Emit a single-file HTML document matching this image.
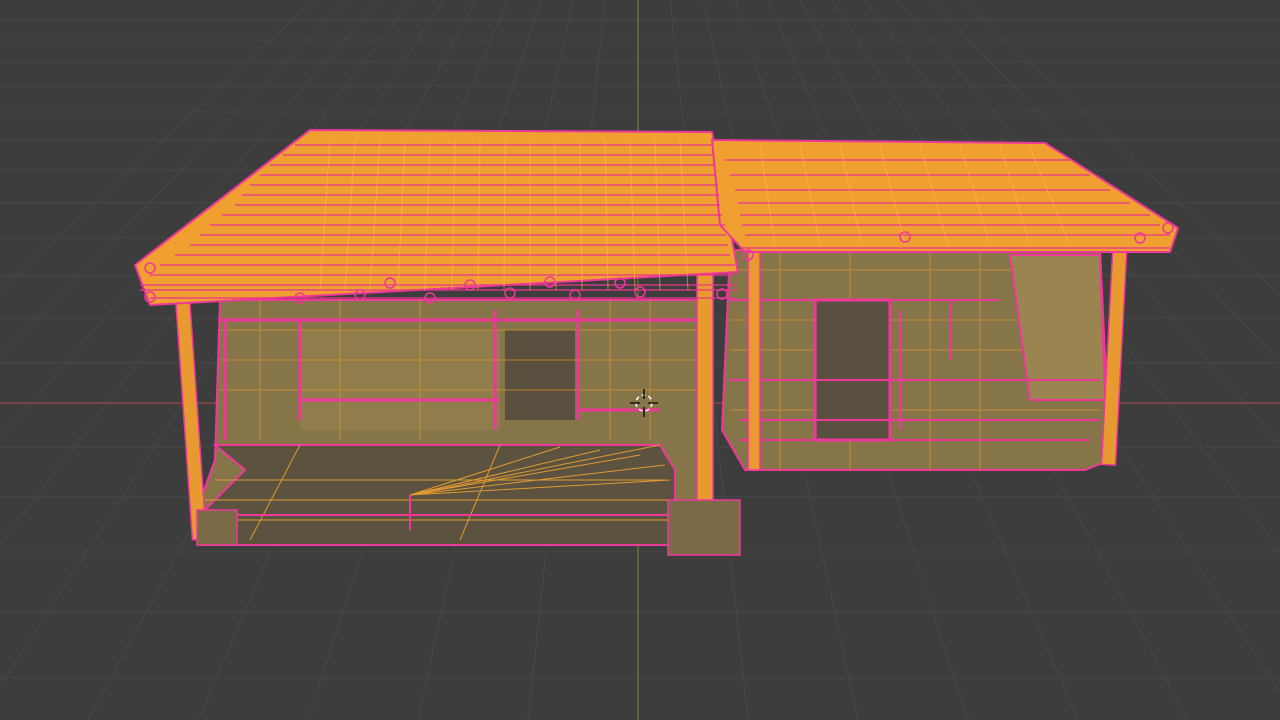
<!DOCTYPE html>
<html><head><style>html,body{margin:0;padding:0;background:#3d3d3d;overflow:hidden}svg{display:block}</style></head>
<body>
<svg width="1280" height="720" viewBox="0 0 1280 720" xmlns="http://www.w3.org/2000/svg">
<rect width="1280" height="720" fill="#3d3d3d"/>
<g stroke="#474747" stroke-width="1">
<path d="M0 20H1280M0 40H1280M0 62H1280M0 86H1280M0 112H1280M0 140H1280M0 170H1280M0 203H1280M0 238H1280M0 276H1280M0 318H1280M0 363H1280M0 447H1280M0 497H1280M0 552H1280M0 612H1280M0 678H1280"/>
<path d="M573 0L418 720M541 0L308 720M508 0L198 720M476 0L88 720M444 0L-22 720M411 0L-132 720M379 0L-242 720M346 0L-352 720M314 0L-462 720M703 0L858 720M735 0L968 720M768 0L1078 720M800 0L1188 720M832 0L1298 720M865 0L1408 720M897 0L1518 720M930 0L1628 720M962 0L1738 720M605 0L528 720M670 0L748 720"/>
</g>
<line x1="0" y1="403" x2="1280" y2="403" stroke="#8a4a4a" stroke-width="1.5"/>
<line x1="638" y1="0" x2="638" y2="720" stroke="#5a7a3a" stroke-width="1.5"/>
<!-- left body -->
<polygon points="220,300 700,300 705,500 670,545 200,545 195,515 215,460" fill="#857548" stroke="#f0379a" stroke-width="2"/>
<polygon points="300,330 500,330 500,430 300,430" fill="#8f7e4c"/>
<polygon points="505,330 575,330 575,420 505,420" fill="#5a5040"/>
<g stroke="#d9902e" stroke-width="1" opacity="0.8"><path d="M220 330H700M220 360H700M220 390H700M260 300V440M340 300V440M420 300V440M610 300V440M650 300V440"/></g>
<polygon points="215,445 660,445 675,470 675,545 200,545 200,515 245,470" fill="#5c5240" stroke="#f0379a" stroke-width="2"/>
<g stroke="#e09a30" stroke-width="1" fill="none">
<path d="M410 495L660 445M410 495L640 455M410 495L665 465M410 495L670 480M410 495L600 450M410 495L560 447M215 480H665M205 500H670M205 520H670M300 445L250 540M500 445L460 540"/>
</g>
<path d="M200 515H670M410 495V530M200 545H670" stroke="#f0379a" stroke-width="2"/>
<g stroke="#f0379a" stroke-width="3" fill="none">
<path d="M495 310V430M578 310V420M300 320V420M225 320V440M300 400H500M580 410H660M220 320H700"/>
</g>
<!-- right body -->
<polygon points="730,250 1100,250 1110,460 1085,470 745,470 722,430" fill="#857548" stroke="#f0379a" stroke-width="2"/>
<g stroke="#d9902e" stroke-width="1" opacity="0.8"><path d="M730 270H1100M730 320H1100M730 350H1100M730 410H1100M780 250V470M850 250V470M930 250V470M980 250V470"/></g>
<polygon points="815,300 890,300 890,440 815,440" fill="#5a5040" stroke="#f0379a" stroke-width="3"/>
<polygon points="1010,255 1100,255 1105,400 1030,400" fill="#9a8550" stroke="#f0379a" stroke-width="2"/>
<g stroke="#f0379a" stroke-width="2"><path d="M730 300H1000M730 380H1100M740 440H1090M900 310V430M950 300V360M740 420H1100"/></g>
<!-- posts -->
<g fill="#e89a30" stroke="#f0379a" stroke-width="1.5">
<rect x="175" y="290" width="14" height="250" transform="rotate(-4 182 290)"/>
<rect x="697" y="260" width="16" height="280"/>
<rect x="748" y="250" width="12" height="220"/>
<rect x="1113" y="245" width="14" height="220" transform="rotate(3 1120 245)"/>
<rect x="668" y="500" width="72" height="55" fill="#7a6a45"/>
<rect x="197" y="510" width="40" height="35" fill="#7a6a45"/>
</g>
<!-- roofs -->
<polygon points="135,265 310,130 712,132 738,272 150,305" fill="#f0a030" stroke="#f0379a" stroke-width="2"/>
<polygon points="712,140 1045,143 1178,228 1170,252 745,252 720,225" fill="#f0a030" stroke="#f0379a" stroke-width="2"/>
<g stroke="#e8378e" stroke-width="1.5" fill="none" opacity="0.85">
<path d="M295 145H712M283 155H713M270 165H715M260 175H716M250 185H718M242 195H719M235 205H720M222 215H722M210 225H725M200 235H726M190 245H728M175 255H730M160 265H735M150 275H736M140 285H738M150 298H735M140 290H738"/>
<path d="M725 160H1070M730 175H1090M735 190H1110M738 203H1130M740 215H1150M745 235H1170M742 248H1170M742 225H1160"/>
</g>
<g stroke="#ffb840" stroke-width="1" fill="none" opacity="0.6">
<path d="M330 140L320 290M355 140L345 290M380 140L370 290M405 140L398 290M430 140L425 290M455 140L452 290M480 140L478 290M505 140L504 290M530 140L530 290M555 140L556 290M580 140L582 290M605 140L608 290M630 140L635 290M655 140L660 290M680 140L688 290M760 145L775 245M800 145L820 245M840 145L862 245M880 145L905 245M920 145L948 245M960 145L990 245M1000 145L1030 245M1030 148L1070 245"/>
</g>
<g fill="none" stroke="#f0379a" stroke-width="1.5">
<circle cx="300" cy="298" r="5"/><circle cx="360" cy="295" r="5"/><circle cx="430" cy="298" r="5"/><circle cx="510" cy="293" r="5"/><circle cx="575" cy="295" r="5"/><circle cx="640" cy="292" r="5"/><circle cx="722" cy="294" r="5"/><circle cx="150" cy="268" r="5"/><circle cx="150" cy="297" r="5"/><circle cx="748" cy="255" r="5"/><circle cx="905" cy="237" r="5"/><circle cx="1140" cy="238" r="5"/><circle cx="1168" cy="228" r="5"/>
<circle cx="390" cy="283" r="5"/><circle cx="470" cy="285" r="5"/><circle cx="550" cy="282" r="5"/><circle cx="620" cy="283" r="5"/>
</g>
<g transform="translate(644,403)"><circle r="8" fill="none" stroke="#fff" stroke-width="1.5" stroke-dasharray="4 3"/><path d="M-14 0H-4M4 0H14M0-14V-4M0 4V14" stroke="#111" stroke-width="1.5"/></g>
</svg>
</body></html>
